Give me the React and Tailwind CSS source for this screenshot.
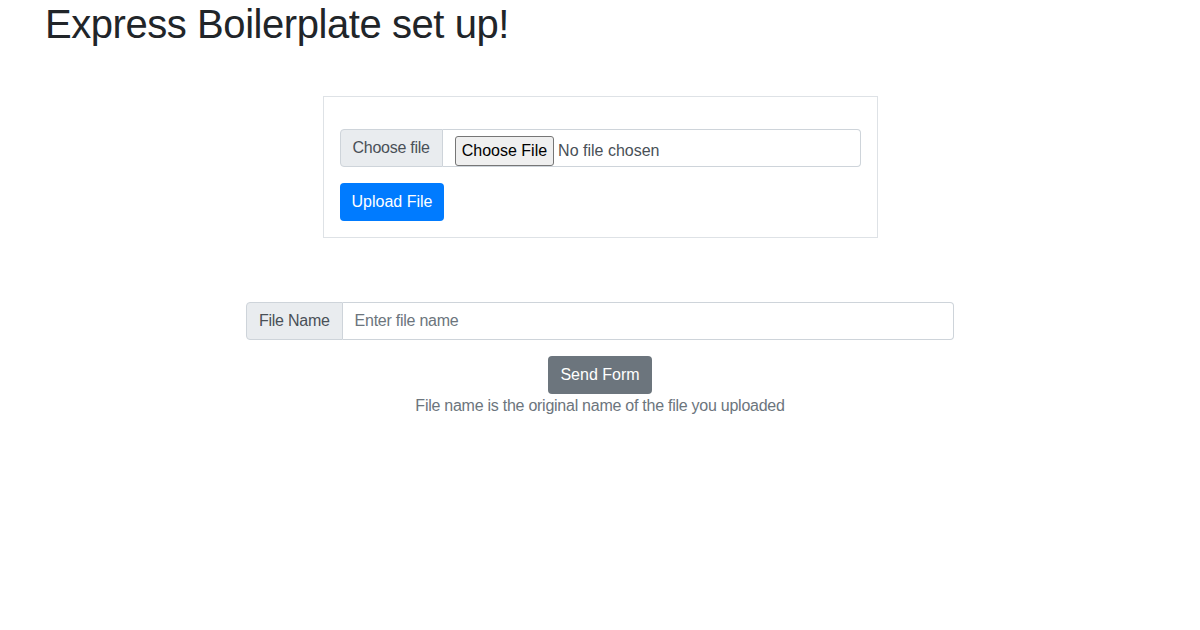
export default function App() {
  return (
    <div className="min-h-screen bg-white text-[#212529] font-['Liberation_Sans',Arial,sans-serif] text-base leading-6 tracking-[-0.016em]">
      <div className="w-[1140px] mx-auto px-[15px]">
        <h1 className="text-[40px] leading-[48px] font-normal mb-[48px] tracking-[-0.011em]">Express Boilerplate set up!</h1>

        {/* upload card */}
        <div className="w-[555px] mx-auto border border-[#dee2e6] px-4 pt-8 pb-4">
          <div className="flex h-[38px]">
            <span className="flex items-center px-3 bg-[#e9ecef] border border-[#ced4da] rounded-l-[4px] text-[#495057]">
              Choose file
            </span>
            <div className="flex-1 flex items-start border border-l-0 border-[#ced4da] rounded-r-[4px] px-3 pt-[6px]">
              <input
                type="file"
                className="text-[#495057] tracking-normal file:text-black file:bg-[#efefef] file:border file:border-[#767676] file:rounded-[3px] file:px-[6px] file:h-[30px] file:mr-[4px]"
              />
            </div>
          </div>
          <button className="mt-4 h-[38px] px-3 bg-[#007bff] text-white rounded-[4px] tracking-normal">Upload File</button>
        </div>

        {/* file name form */}
        <div className="w-[708px] mx-auto mt-[64px] flex flex-col items-center">
          <div className="flex h-[38px] w-full">
            <span className="flex items-center px-3 bg-[#e9ecef] border border-[#ced4da] rounded-l-[4px] text-[#495057]">
              File Name
            </span>
            <input
              type="text"
              placeholder="Enter file name"
              className="flex-1 border border-l-0 border-[#ced4da] rounded-r-[4px] px-3 text-[#495057] placeholder:text-[#6c757d] outline-none"
            />
          </div>
          <button className="mt-4 h-[38px] px-3 bg-[#6c757d] text-white rounded-[4px] tracking-normal">Send Form</button>
          <p className="text-[#6c757d]">File name is the original name of the file you uploaded</p>
        </div>
      </div>
    </div>
  )
}
